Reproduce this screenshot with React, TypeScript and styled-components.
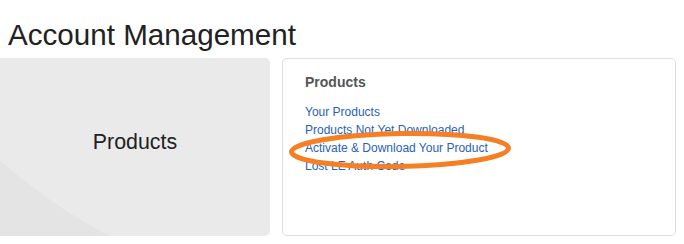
import styled, { createGlobalStyle } from 'styled-components';

const GlobalStyle = createGlobalStyle`
  html, body {
    margin: 0;
    padding: 0;
    background: #ffffff;
    font-family: 'Liberation Sans', Arial, sans-serif;
  }
`;

const Page = styled.div`
  width: 684px;
  height: 244px;
  overflow: hidden;
`;

const Title = styled.h1`
  margin: 18px 0 6px 8px;
  font-size: 29.6px;
  line-height: 34px;
  font-weight: normal;
  color: #222222;
`;

const Row = styled.div`
  display: flex;
  gap: 12px;
`;

// big grey tile, light arc over the lower left corner
const Tile = styled.div`
  width: 270px;
  height: 178px;
  box-sizing: border-box;
  padding-top: 72px;
  border-radius: 0 5px 5px 0;
  background: radial-gradient(circle 585px at 385px -338px, #eaeaea 584.5px, #e4e4e4 585.5px);
  text-align: center;
  font-size: 21.4px;
  line-height: 24px;
  color: #222222;
`;

const Panel = styled.div`
  position: relative;
  width: 394px;
  height: 178px;
  box-sizing: border-box;
  padding: 15px 22px 0;
  border: 1px solid #dddddd;
  border-radius: 5px;
  background: #ffffff;
`;

const PanelTitle = styled.h2`
  margin: 0 0 13px;
  font-size: 14px;
  line-height: 16px;
  font-weight: bold;
  color: #555555;
`;

const Links = styled.ul`
  margin: 0;
  padding: 0;
  list-style: none;
`;

const LinkItem = styled.li`
  font-size: 12px;
  line-height: 18px;

  & > a {
    color: #2662b8;
    text-decoration: none;
  }
`;

const Mark = styled.svg`
  position: absolute;
  left: 4px;
  top: 71px;
  overflow: visible;
  pointer-events: none;
`;

const LINKS = [
  'Your Products',
  'Products Not Yet Downloaded',
  'Activate & Download Your Product',
  'Lost LE Auth Code',
];

export default function App(): JSX.Element {
  return (
    <Page>
      <GlobalStyle />
      <Title>Account Management</Title>
      <Row>
        <Tile>Products</Tile>
        <Panel>
          <PanelTitle>Products</PanelTitle>
          <Links>
            {LINKS.map((text) => (
              <LinkItem key={text}>
                <a href="#">{text}</a>
              </LinkItem>
            ))}
          </Links>
          <Mark width="226" height="40" viewBox="0 0 226 40">
            <ellipse
              cx="113"
              cy="20"
              rx="108.5"
              ry="16.5"
              fill="none"
              stroke="#f57f22"
              strokeWidth="5"
              transform="rotate(-1 113 20)"
            />
          </Mark>
        </Panel>
      </Row>
    </Page>
  );
}
